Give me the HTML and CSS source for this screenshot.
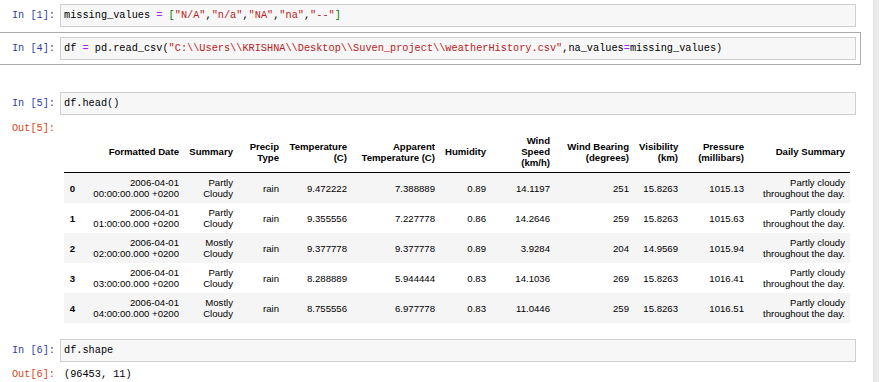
FILE: index.html
```html
<!DOCTYPE html>
<html>

<head>
    <meta charset="utf-8" />
    <title>weatherHistory - Jupyter Notebook</title>
    <link rel="stylesheet" href="styles.css">
</head>

<body>
    <div id="notebook">
        <div class="cell">
            <div class="row">
                <div class="prompt in">In&nbsp;[1]:</div>
                <div class="input_area">missing_values <span class="op">=</span> <span class="br">[</span><span class="str">"N/A"</span>,<span class="str">"n/a"</span>,<span class="str">"NA"</span>,<span class="str">"na"</span>,<span class="str">"--"</span><span class="br">]</span></div>
            </div>
        </div>

        <div class="cell selected">
            <div class="row">
                <div class="prompt in">In&nbsp;[4]:</div>
                <div class="input_area">df <span class="op">=</span> pd.read_csv(<span class="str">"C:\\Users\\KRISHNA\\Desktop\\Suven_project\\weatherHistory.csv"</span>,na_values<span class="op">=</span>missing_values)</div>
            </div>
        </div>

        <div class="cell spaced">
            <div class="row">
                <div class="prompt in">In&nbsp;[5]:</div>
                <div class="input_area">df.head()</div>
            </div>
            <div class="row output">
                <div class="prompt out">Out[5]:</div>
                <div class="output_subarea">
                    <table class="dataframe">
                        <colgroup>
                            <col class="w-idx">
                            <col class="w-date">
                            <col class="w-summary">
                            <col class="w-precip">
                            <col class="w-temp">
                            <col class="w-apparent">
                            <col class="w-humidity">
                            <col class="w-wind">
                            <col class="w-bearing">
                            <col class="w-visibility">
                            <col class="w-pressure">
                            <col class="w-daily">
                        </colgroup>
                        <thead>
                            <tr>
                                <th></th>
                                <th>Formatted Date</th>
                                <th>Summary</th>
                                <th>Precip<br>Type</th>
                                <th>Temperature<br>(C)</th>
                                <th>Apparent<br>Temperature (C)</th>
                                <th>Humidity</th>
                                <th>Wind<br>Speed<br>(km/h)</th>
                                <th>Wind Bearing<br>(degrees)</th>
                                <th>Visibility<br>(km)</th>
                                <th>Pressure<br>(millibars)</th>
                                <th>Daily Summary</th>
                            </tr>
                        </thead>
                        <tbody>
                            <tr>
                                <th>0</th>
                                <td>2006-04-01<br>00:00:00.000 +0200</td>
                                <td>Partly<br>Cloudy</td>
                                <td>rain</td>
                                <td>9.472222</td>
                                <td>7.388889</td>
                                <td>0.89</td>
                                <td>14.1197</td>
                                <td>251</td>
                                <td>15.8263</td>
                                <td>1015.13</td>
                                <td>Partly cloudy<br>throughout the day.</td>
                            </tr>
                            <tr>
                                <th>1</th>
                                <td>2006-04-01<br>01:00:00.000 +0200</td>
                                <td>Partly<br>Cloudy</td>
                                <td>rain</td>
                                <td>9.355556</td>
                                <td>7.227778</td>
                                <td>0.86</td>
                                <td>14.2646</td>
                                <td>259</td>
                                <td>15.8263</td>
                                <td>1015.63</td>
                                <td>Partly cloudy<br>throughout the day.</td>
                            </tr>
                            <tr>
                                <th>2</th>
                                <td>2006-04-01<br>02:00:00.000 +0200</td>
                                <td>Mostly<br>Cloudy</td>
                                <td>rain</td>
                                <td>9.377778</td>
                                <td>9.377778</td>
                                <td>0.89</td>
                                <td>3.9284</td>
                                <td>204</td>
                                <td>14.9569</td>
                                <td>1015.94</td>
                                <td>Partly cloudy<br>throughout the day.</td>
                            </tr>
                            <tr>
                                <th>3</th>
                                <td>2006-04-01<br>03:00:00.000 +0200</td>
                                <td>Partly<br>Cloudy</td>
                                <td>rain</td>
                                <td>8.288889</td>
                                <td>5.944444</td>
                                <td>0.83</td>
                                <td>14.1036</td>
                                <td>269</td>
                                <td>15.8263</td>
                                <td>1016.41</td>
                                <td>Partly cloudy<br>throughout the day.</td>
                            </tr>
                            <tr>
                                <th>4</th>
                                <td>2006-04-01<br>04:00:00.000 +0200</td>
                                <td>Mostly<br>Cloudy</td>
                                <td>rain</td>
                                <td>8.755556</td>
                                <td>6.977778</td>
                                <td>0.83</td>
                                <td>11.0446</td>
                                <td>259</td>
                                <td>15.8263</td>
                                <td>1016.51</td>
                                <td>Partly cloudy<br>throughout the day.</td>
                            </tr>
                        </tbody>
                    </table>
                </div>
            </div>
        </div>

        <div class="cell">
            <div class="row">
                <div class="prompt in">In&nbsp;[6]:</div>
                <div class="input_area">df.shape</div>
            </div>
            <div class="row output">
                <div class="prompt out">Out[6]:</div>
                <div class="output_text">(96453, 11)</div>
            </div>
        </div>
    </div>
    <div id="scrollbar"></div>
</body>

</html>
```

FILE: styles.css
```css
* {
    margin: 0;
    padding: 0;
    box-sizing: border-box;
}

body {
    background: #fff;
    color: #000;
    font-family: "Liberation Sans", Arial, sans-serif;
    overflow: hidden;
}

#notebook {
    width: 862px;
    margin-left: -1px;
    margin-top: -1px;
}

.cell {
    display: flex;
    flex-direction: column;
    border: 1px solid transparent;
    padding: 4px;
}

.cell.selected {
    border-color: #ababab;
}

.cell.spaced {
    margin-top: 22px;
}

.row {
    display: flex;
    align-items: flex-start;
}

/* In [n]: / Out[n]: */
.prompt {
    flex: none;
    width: 56px;
    padding-right: 5px;
    text-align: right;
    font-family: "Liberation Mono", "DejaVu Sans Mono", monospace;
    font-size: 10.25px;
    line-height: 13px;
    white-space: nowrap;
}

.prompt.in {
    margin-top: 5px;
    color: #303f9f;
}

.prompt.out {
    color: #d84315;
}

.input_area {
    flex: 1;
    height: 23px;
    padding: 4px 3px;
    background: #f7f7f7;
    border: 1px solid #cfcfcf;
    font-family: "Liberation Mono", "DejaVu Sans Mono", monospace;
    font-size: 10.25px;
    line-height: 13px;
    white-space: pre;
    overflow: hidden;
}

.input_area .op {
    color: #aa22ff;
}

.input_area .str {
    color: #ba2121;
}

.input_area .br {
    color: #008000;
}

.output {
    margin-top: 7px;
}

.output_subarea {
    padding: 9px 0 6px 4px;
}

.output_text {
    padding-left: 4px;
    font-family: "Liberation Mono", "DejaVu Sans Mono", monospace;
    font-size: 10.25px;
    line-height: 13px;
    white-space: pre;
}

.cell:last-child .output {
    margin-top: 6px;
}

/* dataframe */
.dataframe {
    table-layout: fixed;
    width: 786px;
    border-collapse: collapse;
    border-spacing: 0;
    font-size: 9.6px;
    line-height: 11px;
}

.dataframe th,
.dataframe td {
    padding: 4px 5px;
    text-align: right;
    vertical-align: middle;
    white-space: nowrap;
    border: none;
}

.dataframe th {
    font-weight: bold;
}

.dataframe thead th {
    border-bottom: 1px solid #000;
}

.dataframe tbody tr:nth-child(odd) {
    background: #f5f5f5;
}

.w-idx { width: 16px; }
.w-date { width: 104px; }
.w-summary { width: 54px; }
.w-precip { width: 46px; }
.w-temp { width: 68px; }
.w-apparent { width: 88px; }
.w-humidity { width: 51px; }
.w-wind { width: 64px; }
.w-bearing { width: 79px; }
.w-visibility { width: 49px; }
.w-pressure { width: 66px; }
.w-daily { width: 101px; }

#scrollbar {
    position: fixed;
    top: 0;
    right: 0;
    width: 6px;
    height: 100%;
    background: linear-gradient(90deg, #dedede 0, #e8e8e8 1px, #eeeeee 100%);
}
```
